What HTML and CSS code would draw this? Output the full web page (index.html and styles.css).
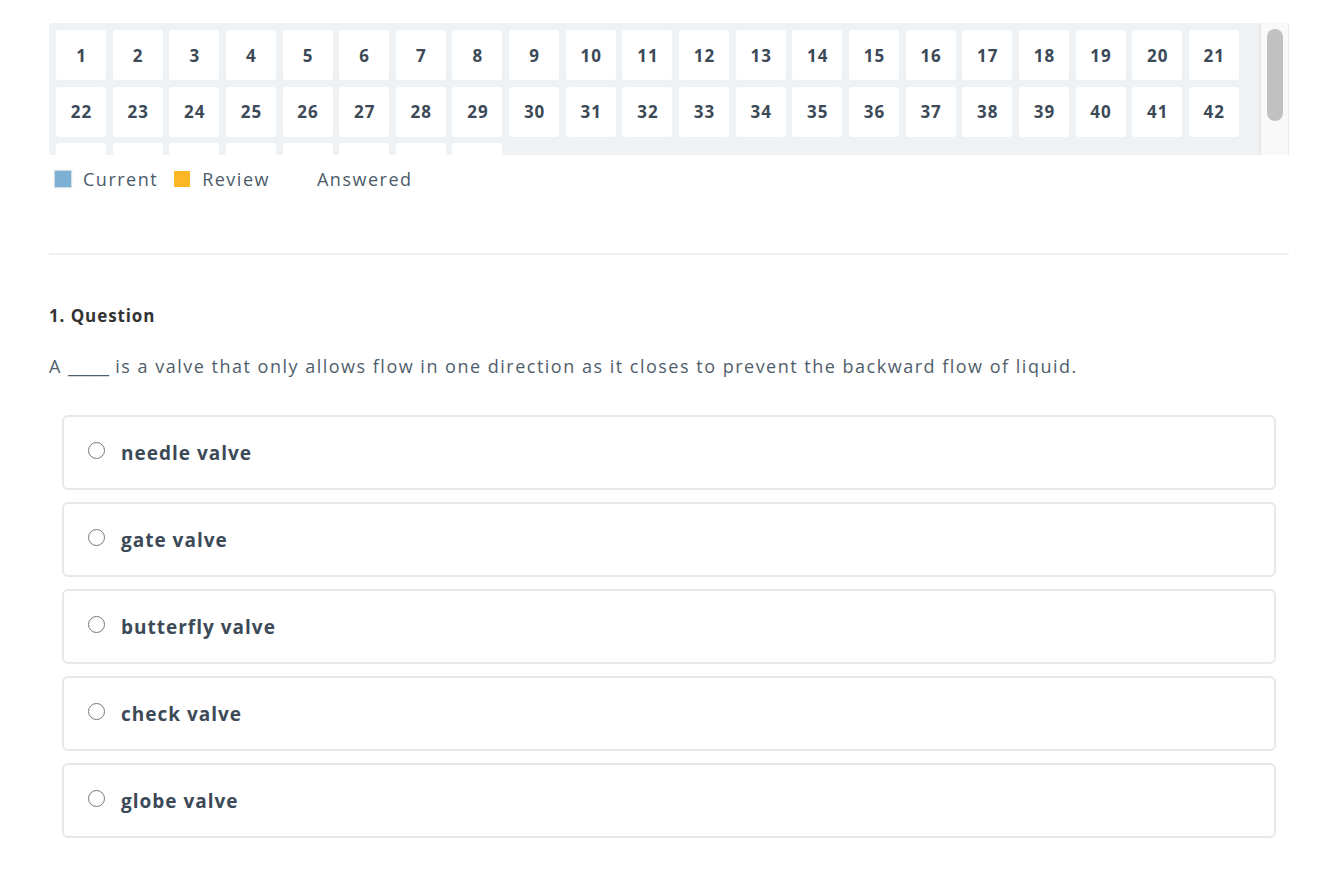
FILE: index.html
```html
<!DOCTYPE html>
<html lang="en">
<head>
<meta charset="utf-8">
<title>Quiz</title>
<link rel="stylesheet" href="styles.css">
</head>
<body>
<div class="page">
  <div class="nav">
    <div class="nav-grid">
      <div class="tile">1</div><div class="tile">2</div><div class="tile">3</div><div class="tile">4</div><div class="tile">5</div><div class="tile">6</div><div class="tile">7</div>
      <div class="tile">8</div><div class="tile">9</div><div class="tile">10</div><div class="tile">11</div><div class="tile">12</div><div class="tile">13</div><div class="tile">14</div>
      <div class="tile">15</div><div class="tile">16</div><div class="tile">17</div><div class="tile">18</div><div class="tile">19</div><div class="tile">20</div><div class="tile">21</div>
      <div class="tile">22</div><div class="tile">23</div><div class="tile">24</div><div class="tile">25</div><div class="tile">26</div><div class="tile">27</div><div class="tile">28</div>
      <div class="tile">29</div><div class="tile">30</div><div class="tile">31</div><div class="tile">32</div><div class="tile">33</div><div class="tile">34</div><div class="tile">35</div>
      <div class="tile">36</div><div class="tile">37</div><div class="tile">38</div><div class="tile">39</div><div class="tile">40</div><div class="tile">41</div><div class="tile">42</div>
      <div class="tile">43</div><div class="tile">44</div><div class="tile">45</div><div class="tile">46</div><div class="tile">47</div><div class="tile">48</div><div class="tile">49</div>
      <div class="tile">50</div>
    </div>
    <div class="scrollbar"><div class="thumb"></div></div>
  </div>

  <div class="legend">
    <span class="swatch swatch-current"></span><span class="legend-label">Current</span>
    <span class="swatch swatch-review"></span><span class="legend-label">Review</span>
    <span class="swatch swatch-answered"></span><span class="legend-label">Answered</span>
  </div>

  <hr class="divider">

  <h3 class="q-title">1. Question</h3>
  <p class="q-text">A <span class="blank">____</span> is a valve that only allows flow in one direction as it closes to prevent the backward flow of liquid.</p>

  <ul class="options">
    <li class="option"><span class="radio"></span><span class="option-label">needle valve</span></li>
    <li class="option"><span class="radio"></span><span class="option-label">gate valve</span></li>
    <li class="option"><span class="radio"></span><span class="option-label">butterfly valve</span></li>
    <li class="option"><span class="radio"></span><span class="option-label">check valve</span></li>
    <li class="option"><span class="radio"></span><span class="option-label">globe valve</span></li>
  </ul>
</div>
</body>
</html>
```

FILE: styles.css
```css
* { box-sizing: border-box; }
html, body { margin: 0; padding: 0; background: #fff; }
body {
  font-family: "Open Sans", "DejaVu Sans", sans-serif;
  color: #4d5c6a;
}
.page {
  width: 1240px;
  margin-left: 49px;
  padding-top: 23px;
}
.nav {
  display: flex;
  height: 132px;
}
.nav-grid {
  flex: 1;
  background: #eef2f5;
  overflow: hidden;
  padding: 7px 20px 0 7px;
  display: grid;
  grid-template-columns: repeat(21, 50px);
  grid-auto-rows: 50px;
  justify-content: space-between;
  row-gap: 6.5px;
  border-radius: 3px 0 0 3px;
}
.tile {
  background: #fff;
  border-radius: 3px;
  display: flex;
  align-items: center;
  justify-content: center;
  font-weight: 700;
  font-size: 17px;
  letter-spacing: 1px;
  padding-left: 1px;
  color: #3c4a58;
}
.scrollbar {
  width: 30px;
  background: #f9f9f9;
  border-left: 2px solid #e8e8e8;
  border-right: 1px solid #ececec;
  padding: 6px 0 0 6px;
}
.thumb {
  width: 16px;
  height: 92px;
  border-radius: 8px;
  background: #c1c1c1;
}
.legend {
  display: flex;
  align-items: center;
  height: 24px;
  margin-top: 12px;
  padding-left: 6px;
  font-size: 18px;
  letter-spacing: 1.5px;
  color: #4b5b6a;
}
.swatch {
  width: 16px;
  height: 16px;
  margin-right: 12px;
}
.legend-label { margin-right: 16px; }
.swatch-current { background: #7bafd4; box-shadow: 0 0 1px 1px #d4dde4; }
.swatch-review { background: #fbb724; }
.swatch-answered { background: #fff; margin-left: 3px; }
.divider {
  border: 0;
  height: 2px;
  background: #eef2f5;
  margin: 62px 0 0 0;
}
.q-title {
  margin: 50px 0 0 0;
  font-size: 17px;
  font-weight: 700;
  letter-spacing: 0.9px;
  color: #333;
  line-height: 22px;
}
.q-text {
  margin: 27px 0 0 0;
  font-size: 18px;
  line-height: 24px;
  letter-spacing: 1.5px;
  color: #4f5e6c;
}
.blank {
  letter-spacing: 0;
  display: inline-block;
  width: 41px;
  white-space: nowrap;
  transform: scaleX(1.3);
  transform-origin: left center;
}
.options {
  list-style: none;
  margin: 37px 13px 0 13px;
  padding: 0;
  display: flex;
  flex-direction: column;
  gap: 12px;
}
.option {
  height: 75px;
  border: 2px solid #e5e9ee;
  border-radius: 6px;
  display: flex;
  align-items: center;
  padding-left: 24px;
}
.radio {
  width: 17px;
  height: 17px;
  border: 1px solid #767676;
  border-radius: 50%;
  margin-right: 16px;
  margin-top: -4px;
}
.option-label {
  font-size: 19px;
  font-weight: 700;
  letter-spacing: 1px;
  color: #3c4a58;
}
```
